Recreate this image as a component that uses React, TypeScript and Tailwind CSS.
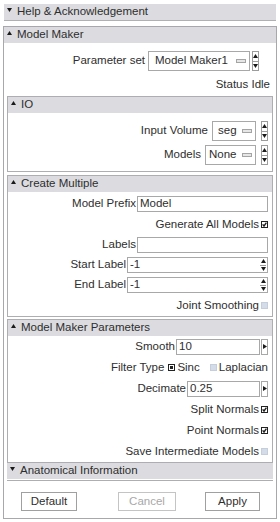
import React from "react";

type Dir = "up" | "down" | "right";

const Tri = ({ dir, s = 5 }: { dir: Dir; s?: number }) => {
  const h = Math.ceil(s / 2) + 1;
  const w = dir === "right" ? h : s;
  const hh = dir === "right" ? s : h;
  const pts =
    dir === "up"
      ? `0,${h} ${s},${h} ${s / 2},0`
      : dir === "down"
      ? `0,0 ${s},0 ${s / 2},${h}`
      : `0,0 ${h},${s / 2} 0,${s}`;
  return (
    <svg width={w} height={hh} viewBox={`0 0 ${w} ${hh}`} className="block shrink-0">
      <polygon points={pts} fill="#1a1a1a" />
    </svg>
  );
};

const Header = ({ title, open }: { title: string; open: boolean }) => (
  <div className="flex h-[16px] items-center bg-[#dcdce0] pl-[3px] leading-none">
    <span className="mr-[5px] -mt-[4px]">
      <Tri dir={open ? "up" : "down"} />
    </span>
    <span>{title}</span>
  </div>
);

const UpDown = ({ className = "" }: { className?: string }) => (
  <div className={"flex h-[20px] w-[7px] flex-col border border-[#9c9c9c] bg-white " + className}>
    <div className="flex flex-1 items-center justify-center border-b border-[#9c9c9c]">
      <Tri dir="up" s={5} />
    </div>
    <div className="flex flex-1 items-center justify-center">
      <Tri dir="down" s={5} />
    </div>
  </div>
);

const OptionMenu = ({ value, className }: { value: string; className: string }) => (
  <div className={"flex h-[20px] items-center border border-[#a8a8a8] bg-white pr-[3px] " + className}>
    <span className="flex-1 leading-none">{value}</span>
    <span className="h-[4px] w-[10px] border border-[#a4a4a4] bg-[#e6e6e6]" />
  </div>
);

const Entry = ({ value = "", className, spin }: { value?: string; className: string; spin?: boolean }) => (
  <div className={"flex h-[16px] items-center border border-[#a8a8a8] bg-white pl-[2px] leading-none " + className}>
    <span className="flex-1">{value}</span>
    {spin && (
      <div className="mr-[1px] flex h-[12px] w-[6px] flex-col items-center justify-between">
        <Tri dir="up" s={5} />
        <div className="h-px w-[6px] bg-[#9c9c9c]" />
        <Tri dir="down" s={5} />
      </div>
    )}
  </div>
);

const ArrowBtn = () => (
  <div className="ml-[1px] flex h-[16px] w-[7px] items-center justify-center border border-[#a8a8a8] bg-white">
    <Tri dir="right" s={5} />
  </div>
);

const Check = ({ on }: { on: boolean }) =>
  on ? (
    <svg width="7" height="7" viewBox="0 0 7 7" className="block shrink-0">
      <rect x="0.5" y="0.5" width="6" height="6" fill="#fff" stroke="#222" />
      <path d="M1.6 3.4 L3 5 L5.4 1.6" stroke="#222" strokeWidth="1.4" fill="none" />
    </svg>
  ) : (
    <svg width="7" height="7" viewBox="0 0 7 7" className="block shrink-0">
      <rect x="0.5" y="0.5" width="6" height="6" fill="#d3dce8" stroke="#c5cfdc" />
    </svg>
  );

const Radio = ({ on }: { on: boolean }) =>
  on ? (
    <svg width="7" height="7" viewBox="0 0 7 7" className="block shrink-0">
      <rect x="0.5" y="0.5" width="6" height="6" fill="#fff" stroke="#222" />
      <rect x="2" y="2" width="3" height="3" fill="#222" />
    </svg>
  ) : (
    <svg width="7" height="7" viewBox="0 0 7 7" className="block shrink-0">
      <rect x="0.5" y="0.5" width="6" height="6" fill="#d3dce8" stroke="#c5cfdc" />
    </svg>
  );

const CheckRow = ({ label, on }: { label: string; on: boolean }) => (
  <div className="flex h-[21px] items-center justify-end gap-[2px]">
    <span>{label}</span>
    <Check on={on} />
  </div>
);

export default function App() {
  return (
    <div className="h-[522px] w-[280px] overflow-hidden bg-white font-['Liberation_Sans',Arial,sans-serif] text-[11.5px] text-[#2e2e2e]">
      <div className="px-[4px] pt-[4px]">
        <div className="border-b border-[#b0b0b4]">
          <Header title="Help & Acknowledgement" open={false} />
        </div>
      </div>

      <div className="mx-[3px] mt-[5px] h-[493px] border border-[#a8a8ac]">
        <Header title="Model Maker" open />
        <div className="px-[3px]">
          <div className="mt-[7px] flex h-[22px] items-center justify-end pr-[14px]">
            <span className="mr-[3px]">Parameter set</span>
            <OptionMenu value="Model Maker1" className="w-[102px] pl-[6px]" />
            <UpDown className="ml-[2px]" />
          </div>
          <div className="mt-[6px] flex h-[14px] items-center justify-end pr-[3px]">Status Idle</div>

          <div className="mt-[4px] border border-[#aeaeb2]">
            <Header title="IO" open />
            <div className="px-[4px] pb-[5px] pt-[7px]">
              <div className="flex h-[22px] items-center justify-end">
                <span className="mr-[4px]">Input Volume</span>
                <OptionMenu value="seg" className="w-[44px] pl-[5px]" />
                <UpDown className="ml-[5px]" />
              </div>
              <div className="mt-[2px] flex h-[22px] items-center justify-end">
                <span className="mr-[4px]">Models</span>
                <OptionMenu value="None" className="w-[51px] pl-[3px]" />
                <UpDown className="ml-[5px]" />
              </div>
            </div>
          </div>

          <div className="mt-[3px] border border-[#aeaeb2]">
            <Header title="Create Multiple" open />
            <div className="px-[4px] pt-[2px]">
              <div className="flex h-[20px] items-center justify-end">
                <span className="mr-px">Model Prefix</span>
                <Entry value="Model" className="w-[131px]" />
              </div>
              <CheckRow label="Generate All Models" on />
              <div className="flex h-[20px] items-center justify-end">
                <span className="mr-px">Labels</span>
                <Entry className="w-[131px]" />
              </div>
              <div className="flex h-[20px] items-center justify-end">
                <span className="mr-px">Start Label</span>
                <Entry value="-1" spin className="w-[141px]" />
              </div>
              <div className="flex h-[20px] items-center justify-end">
                <span className="mr-px">End Label</span>
                <Entry value="-1" spin className="w-[141px]" />
              </div>
              <CheckRow label="Joint Smoothing" on={false} />
            </div>
          </div>

          <div className="mt-[2px] border border-[#aeaeb2]">
            <Header title="Model Maker Parameters" open />
            <div className="px-[4px]">
              <div className="flex h-[21px] items-center justify-end">
                <span className="mr-px">Smooth</span>
                <Entry value="10" className="w-[84px]" />
                <ArrowBtn />
              </div>
              <div className="flex h-[21px] items-center justify-end">
                <span className="mr-[4px]">Filter Type</span>
                <Radio on />
                <span className="ml-[2px] mr-[10px]">Sinc</span>
                <Radio on={false} />
                <span className="ml-[2px]">Laplacian</span>
              </div>
              <div className="flex h-[21px] items-center justify-end">
                <span className="mr-px">Decimate</span>
                <Entry value="0.25" className="w-[73px]" />
                <ArrowBtn />
              </div>
              <CheckRow label="Split Normals" on />
              <CheckRow label="Point Normals" on />
              <CheckRow label="Save Intermediate Models" on={false} />
            </div>
          </div>

          <div className="border-b border-[#aeaeb2] pb-px">
            <Header title="Anatomical Information" open={false} />
          </div>

          <div className="mt-[11px] flex">
            <div className="ml-[14px] flex h-[19px] w-[56px] items-center justify-center border border-[#a0a0a0] bg-white">Default</div>
            <div className="ml-[41px] flex h-[19px] w-[58px] items-center justify-center border border-[#c4c4c4] bg-white text-[#a8a8a8]">Cancel</div>
            <div className="ml-[29px] flex h-[19px] w-[55px] items-center justify-center border border-[#a0a0a0] bg-white">Apply</div>
          </div>
        </div>
      </div>
    </div>
  );
}
